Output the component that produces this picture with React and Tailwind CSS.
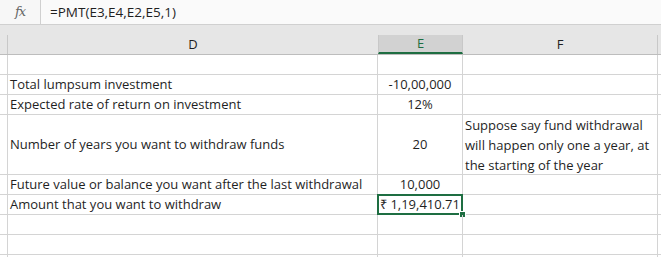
import React from "react";

const rows = [
  { h: "h-[20px]", d: "", e: "", f: [] },
  { h: "h-[20px]", d: "Total lumpsum investment", e: "-10,00,000", f: [] },
  { h: "h-[20px]", d: "Expected rate of return on investment", e: "12%", f: [] },
  {
    h: "h-[60px]",
    d: "Number of years you want to withdraw funds",
    e: "20",
    f: ["Suppose say fund withdrawal", "will happen only one a year, at", "the starting of the year"],
  },
  { h: "h-[20px]", d: "Future value or balance you want after the last withdrawal", e: "10,000", f: [] },
  { h: "h-[20px]", d: "Amount that you want to withdraw", e: "₹ 1,19,410.71", f: [], selected: true },
  { h: "h-[20px]", d: "", e: "", f: [] },
  { h: "h-[20px]", d: "", e: "", f: [] },
  { h: "h-[20px]", d: "", e: "", f: [] },
];

export default function App() {
  return (
    <div className="w-[661px] h-[257px] overflow-hidden bg-white text-[#1f1f1f] font-['Open_Sans',sans-serif]">
      {/* formula bar */}
      <div className="flex h-[25px] bg-[#f7f7f7] border-b border-[#d0d0d0]">
        <div className="w-[41px] flex items-center justify-center border-r border-[#d0d0d0]">
          <span className="font-['DejaVu_Serif',serif] italic text-[13px] text-[#666] tracking-[-1px]">fx</span>
        </div>
        <div className="flex-1 flex items-center pl-[9px] text-[13.5px] bg-[#fafafa]">=PMT(E3,E4,E2,E5,1)</div>
      </div>

      {/* column headers */}
      <div className="bg-[#e6e6e6] pt-[10px] border-b border-[#bdbdbd]">
        <div className="flex h-[19px] text-[13px]">
          <div className="w-[8px] border-r border-[#c8c8c8]" />
          <div className="w-[370px] flex items-center justify-center">D</div>
          <div className="w-[85px] flex items-center justify-center bg-[#d2d2d2] text-[#1e6e42] border-b-2 border-[#1e6e42] border-l border-r border-l-[#c8c8c8] border-r-[#c8c8c8]">
            E
          </div>
          <div className="w-[195px] flex items-center justify-center border-r border-[#c8c8c8]">F</div>
          <div className="flex-1" />
        </div>
      </div>

      {/* grid */}
      {rows.map((r, i) => (
        <div key={i} className={`flex ${r.h} text-[13px]`}>
          <div className="w-[8px] border-r border-b border-[#d4d4d4]" />
          <div className="w-[370px] flex items-center pl-[2px] border-r border-b border-[#d4d4d4] whitespace-nowrap">
            {r.d}
          </div>
          <div className="w-[85px] relative flex items-center justify-center border-r border-b border-[#d4d4d4] whitespace-nowrap">
            {r.e}
            {r.selected && (
              <>
                <div className="absolute -left-[1px] -top-[1px] right-[-1px] bottom-[-1px] border-2 border-[#1e6e42]" />
                <div className="absolute right-[-4px] bottom-[-4px] w-[7px] h-[7px] bg-[#1e6e42] border border-white" />
              </>
            )}
          </div>
          <div className="w-[195px] flex flex-col justify-center pl-[2px] border-r border-b border-[#d4d4d4] leading-[20px] whitespace-nowrap">
            {r.f.map((l) => (
              <div key={l}>{l}</div>
            ))}
          </div>
          <div className="flex-1 border-b border-[#d4d4d4]" />
        </div>
      ))}
    </div>
  );
}
